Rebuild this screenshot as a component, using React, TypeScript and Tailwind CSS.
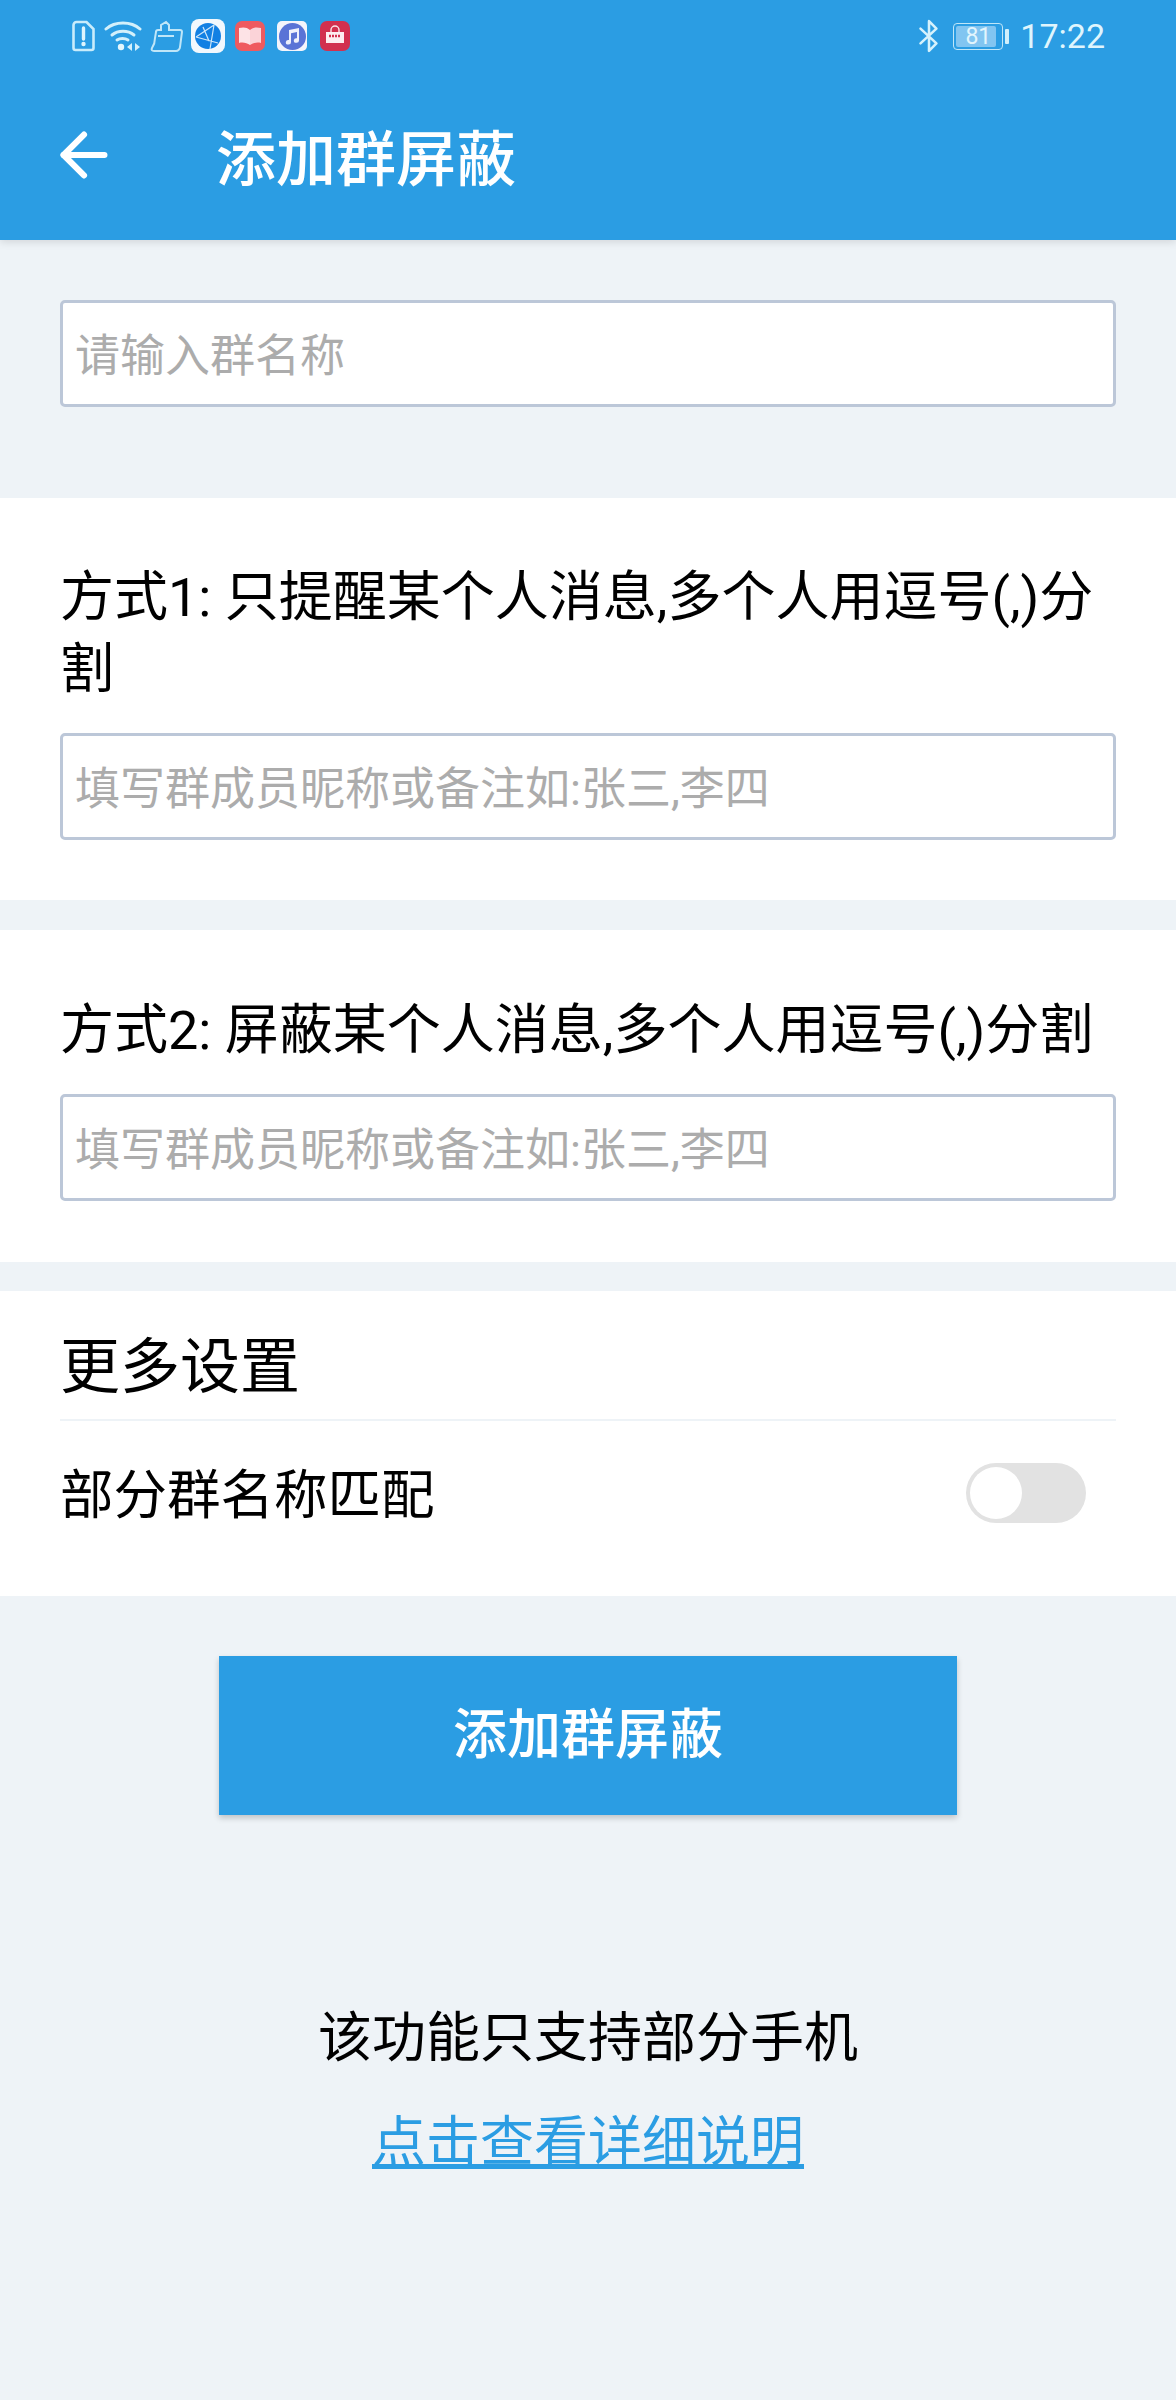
import { ArrowLeft } from 'lucide-react'

function StatusIcons() {
  return (
    <div className="flex items-center">
      <svg width="27" height="34" viewBox="0 0 26 34" fill="none" className="mr-[7px]">
        <path d="M3 6a3 3 0 0 1 3-3h10l7 7v19a2 2 0 0 1-2 2H5a2 2 0 0 1-2-2z" stroke="#c9ecfb" strokeWidth="2.6" />
        <path d="M13 9v11" stroke="#dff5fd" strokeWidth="3.4" strokeLinecap="round" />
        <circle cx="13" cy="25" r="2.2" fill="#dff5fd" />
      </svg>
      <svg width="38" height="32" viewBox="0 0 38 32" fill="none" className="mr-[8px]">
        <path d="M2 9c9-8 25-8 34 0" stroke="#d3f0fb" strokeWidth="3" strokeLinecap="round" />
        <path d="M8 15c6-5 16-5 22 0" stroke="#d3f0fb" strokeWidth="3" strokeLinecap="round" />
        <path d="M13 20c3-2 8-2 11 0" stroke="#d3f0fb" strokeWidth="3" strokeLinecap="round" />
        <circle cx="17" cy="27" r="3.2" fill="#e4f7fd" />
        <path d="M28 23v8l-5-4zM31 23v8l5-4z" fill="#d3f0fb" />
      </svg>
      <svg width="33" height="34" viewBox="0 0 33 34" fill="none" className="mr-[8px]">
        <path d="M11 11V6l5-3 3 3v5h11c1 0 2 1 2 2l-2 15c0 2-2 4-4 4H4c-2 0-3-1-2-3 2-3 3-6 3-10l1-6c0-1 1-2 2-2z" stroke="#bfe6f8" strokeWidth="2" />
        <path d="M8 17h16" stroke="#bfe6f8" strokeWidth="2" />
      </svg>
      <div className="mr-[10px] flex h-[34px] w-[34px] items-center justify-center rounded-[8px] bg-[#f2f8fd]">
        <svg width="28" height="28" viewBox="0 0 28 28" fill="none">
          <circle cx="14" cy="14" r="13" fill="#1280e3" />
          <path d="M2 15 20 3M2 15l22 6M20 3l-4 24M9 5l6 14" stroke="#cfe7fa" strokeWidth="1.2" />
        </svg>
      </div>
      <div className="mr-[12px] flex h-[30px] w-[30px] items-center justify-center rounded-[7px] bg-[#ef5a5f]">
        <svg width="24" height="20" viewBox="0 0 24 20">
          <path d="M1 2c4-1 8-1 11 2v15c-3-2-7-3-11-2z" fill="#fde3e6" />
          <path d="M23 2c-4-1-8-1-11 2v15c3-2 7-3 11-2z" fill="#fbd3d8" />
        </svg>
      </div>
      <div className="mr-[13px] flex h-[30px] w-[30px] items-center justify-center rounded-[5px] bg-[#f4f4fb]">
        <div className="flex h-[27px] w-[27px] items-center justify-center rounded-full bg-[#5a73d6]">
          <svg width="16" height="17" viewBox="0 0 16 17" fill="#eef0fb">
            <path d="M5 2 15 0v12.5a2.6 2.3 0 1 1-2-2.2V4L7 5.2v9a2.6 2.3 0 1 1-2-2.2z" />
          </svg>
        </div>
      </div>
      <div className="flex h-[30px] w-[30px] items-center justify-center rounded-[7px] bg-[#d2304f]">
        <svg width="24" height="24" viewBox="0 0 24 24" fill="none">
          <path d="M8 8V6a4 4 0 0 1 8 0v2" stroke="#fbe4e9" strokeWidth="1.4" />
          <path d="M3 8h18v11H3z" fill="#fdeef1" />
          <path d="M6 12h12" stroke="#d2304f" strokeWidth="2.4" strokeDasharray="2 1" />
        </svg>
      </div>
    </div>
  )
}

function StatusRight() {
  return (
    <div className="flex items-center">
      <svg width="24" height="34" viewBox="0 0 20 32" fill="none" className="mr-[12px]">
        <path d="m2 9 15 14-7 7V2l7 7L2 23" stroke="#d6f2fc" strokeWidth="2.4" strokeLinecap="round" strokeLinejoin="round" />
      </svg>
      <div className="relative mr-[2px] flex h-[27px] w-[50px] items-center rounded-[4px] border border-[#bfe6f8] p-[2px]">
        <div className="h-full w-[40px] rounded-[2px] bg-[#82c5f1]" />
        <span className="absolute inset-x-0 top-0 text-center font-['Roboto',sans-serif] text-[23px] leading-[25px] text-[#e2f5fd]">81</span>
      </div>
      <div className="mr-[11px] h-[15px] w-[4px] rounded-[1px] bg-[#d0effb]" />
      <span className="font-['Roboto',sans-serif] text-[34px] leading-[40px] text-[#dff5fd]">17:22</span>
    </div>
  )
}

function TextBox({ placeholder }: { placeholder: string }) {
  return (
    <input
      placeholder={placeholder}
      className="block h-[107px] w-full rounded-[5px] border-[3px] border-[#bcc7d8] bg-white px-[12px] pt-[5px] text-[45px] text-black outline-none placeholder:text-[#acacac]"
    />
  )
}

export default function App() {
  return (
    <div className="min-h-[2400px] bg-[#eef3f7] font-['Roboto','Noto_Sans_CJK_SC',sans-serif] text-black">
      <header className="relative h-[240px] bg-[#2b9de3] shadow-[0_2px_8px_rgba(0,0,0,0.12)]">
        <div className="flex h-[72px] items-center justify-between pl-[70px] pr-[71px]">
          <StatusIcons />
          <StatusRight />
        </div>
        <div className="flex h-[168px] items-start pt-[42px]">
          <ArrowLeft size={70} strokeWidth={2.1} className="ml-[49px] mt-[6px] text-white" />
          <h1 className="ml-[97px] mt-[7px] text-[60px] leading-[80px] font-medium text-white">添加群屏蔽</h1>
        </div>
      </header>

      <div className="px-[60px] pt-[60px] pb-[91px]">
        <TextBox placeholder="请输入群名称" />
      </div>

      <section className="bg-white px-[60px] pt-[64px] pb-[60px]">
        <p className="text-[54px] leading-[72px]">方式1: 只提醒某个人消息,多个人用逗号(,)分割</p>
        <div className="mt-[27px]">
          <TextBox placeholder="填写群成员昵称或备注如:张三,李四" />
        </div>
      </section>

      <section className="mt-[30px] bg-white px-[60px] pt-[65px] pb-[61px]">
        <p className="text-[54px] leading-[72px]">方式2: 屏蔽某个人消息,多个人用逗号(,)分割</p>
        <div className="mt-[27px]">
          <TextBox placeholder="填写群成员昵称或备注如:张三,李四" />
        </div>
      </section>

      <section className="mt-[29px] bg-white px-[60px]">
        <div className="flex h-[130px] items-center border-b-[2px] border-[#eef3f7] pt-[26px]">
          <span className="text-[60px] leading-[80px]">更多设置</span>
        </div>
        <div className="flex h-[175px] items-start justify-between pr-[30px] pt-[35px]">
          <span className="text-[53.5px] leading-[80px]">部分群名称匹配</span>
          <div className="mt-[7px] h-[60px] w-[120px] rounded-full bg-[#e2e2e2] p-[4px]">
            <div className="h-[52px] w-[52px] rounded-full bg-white" />
          </div>
        </div>
      </section>

      <div className="flex justify-center pt-[60px]">
        <button className="flex h-[159px] w-[738px] items-center justify-center bg-[#2b9de3] text-[54px] font-medium text-white shadow-[0_3px_6px_rgba(0,0,0,0.2)]">
          添加群屏蔽
        </button>
      </div>

      <div className="pt-[184px] text-center">
        <p className="text-[54px] leading-[80px]">该功能只支持部分手机</p>
        <p className="mt-[24px] text-[54px] leading-[80px] text-[#2b9de3] underline">点击查看详细说明</p>
      </div>
    </div>
  )
}
